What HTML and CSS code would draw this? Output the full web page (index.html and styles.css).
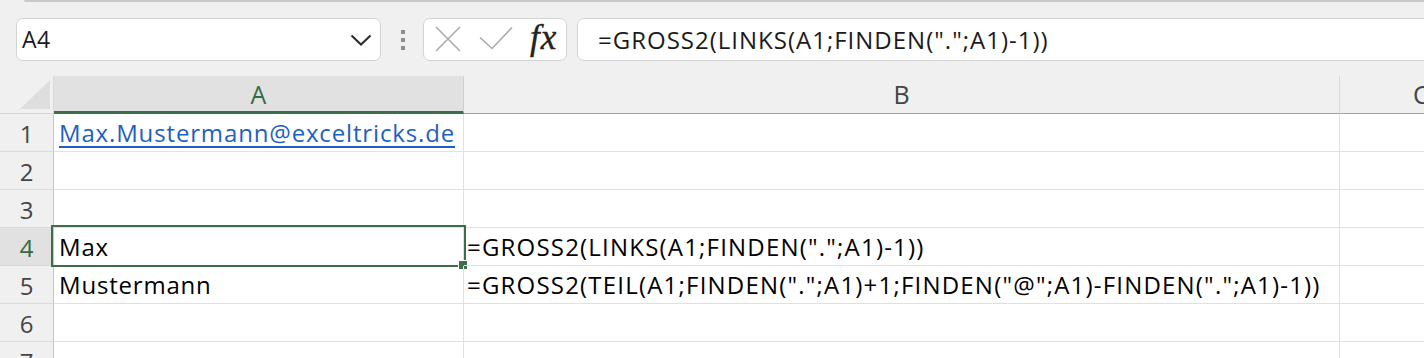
FILE: index.html
```html
<!DOCTYPE html>
<html lang="de">
<head>
<meta charset="utf-8">
<title>Excel</title>
<link rel="stylesheet" href="styles.css">
</head>
<body>
<div class="app">
  <div class="topline"></div>
  <div class="fbar">
    <div class="namebox">
      <span class="nb-text">A4</span>
      <svg class="chev" width="22" height="12" viewBox="0 0 22 12"><path d="M1.5 1.5 L11 10.5 L20.5 1.5" fill="none" stroke="#2b2b2b" stroke-width="2"/></svg>
    </div>
    <div class="grip"><i></i><i></i><i></i></div>
    <div class="fxbox">
      <svg class="ic-x" width="26" height="26" viewBox="0 0 26 26"><path d="M1 1 L25 25 M25 1 L1 25" stroke="#ababab" stroke-width="1.6" fill="none"/></svg>
      <svg class="ic-check" width="34" height="26" viewBox="0 0 34 26"><path d="M1 11.5 L13 22.5 L33 1.5" stroke="#ababab" stroke-width="1.6" fill="none"/></svg>
      <span class="fx">fx</span>
    </div>
    <div class="formula">=GROSS2(LINKS(A1;FINDEN(".";A1)-1))</div>
  </div>

  <div class="sheet">
    <div class="corner"><span class="tri"></span></div>
    <div class="colhdr sel">A</div>
    <div class="colhdr">B</div>
    <div class="colhdr last">C</div>

    <div class="rowhdr">1</div>
    <div class="cell"><span class="link">Max.Mustermann@exceltricks.de</span></div>
    <div class="cell"></div>
    <div class="cell last"></div>

    <div class="rowhdr">2</div>
    <div class="cell"></div>
    <div class="cell"></div>
    <div class="cell last"></div>

    <div class="rowhdr">3</div>
    <div class="cell"></div>
    <div class="cell"></div>
    <div class="cell last"></div>

    <div class="rowhdr sel">4</div>
    <div class="cell active">Max<span class="selbox"><span class="handle"></span></span></div>
    <div class="cell formula-text">=GROSS2(LINKS(A1;FINDEN(".";A1)-1))</div>
    <div class="cell last"></div>

    <div class="rowhdr">5</div>
    <div class="cell">Mustermann</div>
    <div class="cell formula-text">=GROSS2(TEIL(A1;FINDEN(".";A1)+1;FINDEN("@";A1)-FINDEN(".";A1)-1))</div>
    <div class="cell last"></div>

    <div class="rowhdr">6</div>
    <div class="cell"></div>
    <div class="cell"></div>
    <div class="cell last"></div>

    <div class="rowhdr">7</div>
    <div class="cell"></div>
    <div class="cell"></div>
    <div class="cell last"></div>
  </div>
</div>
</body>
</html>
```

FILE: styles.css
```css
* { box-sizing: border-box; }
html, body {
  margin: 0;
  padding: 0;
  background: #f0f0f0;
  overflow: hidden;
  width: 1424px;
  height: 358px;
}
.app {
  font-family: "Open Sans", "Noto Sans", sans-serif;
  color: #000;
  width: 1424px;
}
.topline {
  height: 2px;
  margin-left: 24px;
  background: #c9c9c9;
  border-bottom-left-radius: 4px;
}
.fbar {
  display: flex;
  align-items: stretch;
  height: 43px;
  margin-top: 16px;
  padding-left: 16px;
}
.namebox {
  width: 365px;
  background: #fff;
  border: 1px solid #d3d3d3;
  border-radius: 7px;
  display: flex;
  align-items: center;
  padding-left: 5px;
  padding-right: 8px;
}
.nb-text {
  font-size: 23px;
  letter-spacing: 0.5px;
  flex: 1;
  color: #1b1b1b;
  line-height: 1;
}
.chev { display: block; }
.grip {
  width: 42px;
  display: flex;
  flex-direction: column;
  align-items: center;
  justify-content: center;
  gap: 4px;
  padding-left: 1px;
}
.grip i {
  display: block;
  width: 4px;
  height: 4px;
  background: #8c8c8c;
}
.fxbox {
  width: 144px;
  background: #fff;
  border: 1px solid #d3d3d3;
  border-radius: 7px;
  display: flex;
  align-items: center;
  padding-left: 11px;
}
.ic-x { display: block; margin-top: -2px; }
.ic-check { display: block; margin-left: 18px; margin-top: -2px; }
.fx {
  margin-left: 17px;
  font-family: "Liberation Serif", serif;
  font-style: italic;
  font-size: 35px;
  letter-spacing: 1px;
  line-height: 1;
  color: #222;
  margin-top: -5px;
  -webkit-text-stroke: 0.4px #222;
}
.formula {
  flex: 1;
  margin-left: 10px;
  margin-right: -20px;
  background: #fff;
  border: 1px solid #d3d3d3;
  border-radius: 7px;
  display: flex;
  align-items: center;
  padding-left: 20px;
  font-size: 24px;
  letter-spacing: 1px;
  color: #1b1b1b;
  white-space: nowrap;
}

.sheet {
  margin-top: 15px;
  display: grid;
  grid-template-columns: 54px 410px 876px 1fr;
  grid-template-rows: 38px repeat(7, 38px);
  background: #fff;
}
.corner {
  background: #f0f0f0;
  border-right: 1px solid #d8d8d8;
  border-bottom: 1px solid #d8d8d8;
  position: relative;
}
.tri {
  position: absolute;
  left: 20px;
  top: 4px;
  width: 30px;
  height: 29px;
  background: #dedede;
  clip-path: polygon(100% 0, 100% 100%, 0 100%);
}
.colhdr {
  background: #f0f0f0;
  border-right: 1px solid #dadada;
  border-bottom: 1px solid #a3a3a3;
  font-size: 25px;
  color: #444;
  text-align: center;
  line-height: 37px;
}
.colhdr.sel {
  background: #e1e1e1;
  color: #346b45;
  border-bottom: 3px solid #3b6f4b;
  border-right-color: #d0d0d0;
}
.colhdr.last {
  text-align: left;
  padding-left: 73px;
  border-right: none;
}
.rowhdr {
  background: #f0f0f0;
  border-right: 1px solid #c4c4c4;
  border-bottom: 1px solid #dadada;
  font-size: 24px;
  color: #444;
  text-align: center;
  line-height: 39px;
}
.rowhdr.sel {
  background: #e1e1e1;
  color: #346b45;
}
.cell {
  border-right: 1px solid #e1e1e1;
  border-bottom: 1px solid #e1e1e1;
  font-size: 24px;
  letter-spacing: 0.8px;
  line-height: 38px;
  padding-left: 5px;
  white-space: nowrap;
  position: relative;
}
.cell.last { border-right: none; }
.cell.formula-text {
  padding-left: 3px;
  letter-spacing: 1.2px;
  overflow: visible;
}
.link {
  color: #1f5fc3;
  letter-spacing: 0.85px;
  text-decoration: underline;
  text-decoration-thickness: 2px;
  text-underline-offset: 4px;
}
.selbox {
  position: absolute;
  left: -3px;
  top: -3px;
  right: -3px;
  bottom: -2px;
  border: 2px solid #3b6f4b;
  pointer-events: none;
}
.handle {
  position: absolute;
  right: -3px;
  bottom: -4px;
  width: 8px;
  height: 8px;
  background: #3b6f4b;
  box-shadow: 0 0 0 1px #fff;
}
```
